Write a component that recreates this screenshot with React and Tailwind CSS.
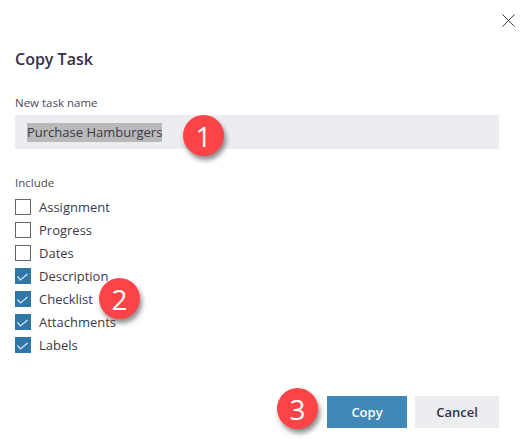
const options = [
  { label: 'Assignment', checked: false },
  { label: 'Progress', checked: false },
  { label: 'Dates', checked: false },
  { label: 'Description', checked: true },
  { label: 'Checklist', checked: true },
  { label: 'Attachments', checked: true },
  { label: 'Labels', checked: true },
];

const Badge = ({ n, className }) => (
  <div
    className={`absolute w-[41px] h-[41px] rounded-full bg-[#fc4346] text-white flex items-center justify-center text-[28px] shadow-[2px_4px_5px_rgba(0,0,0,0.45)] ${className}`}
  >
    {n}
  </div>
);

const Option = ({ label, checked }) => (
  <div className="flex items-center h-[23px] gap-[8px]">
    {checked ? (
      <div className="w-4 h-4 bg-[#2f77a8]">
        <svg width="16" height="16" viewBox="0 0 16 16" fill="none" stroke="#dfeaf2" strokeWidth="1.2">
          <path d="M2.5 8.5 L5.5 12 L12.5 6" />
        </svg>
      </div>
    ) : (
      <div className="w-4 h-4 border border-[#666666] bg-white" />
    )}
    <span className="pt-[3px] text-[13px] text-[#3b3a4a]">{label}</span>
  </div>
);

export default function App() {
  return (
    <div
      className="relative w-[524px] h-[439px] overflow-hidden bg-white pl-[15px] pr-[25px] flex flex-col"
      style={{ fontFamily: '"Open Sans", "Noto Sans", sans-serif' }}
    >
      <button className="absolute top-[14px] right-[9px] w-[13px] h-[13px]">
        <svg width="13" height="13" viewBox="0 0 13 13" fill="none" stroke="#3d3d50" strokeWidth="1">
          <path d="M0.5 0.5 L12.5 12.5 M12.5 0.5 L0.5 12.5" />
        </svg>
      </button>

      <h1 className="mt-[48px] h-[22px] leading-[22px] text-[16px] font-semibold text-[#33324a]">Copy Task</h1>

      <label className="mt-[25px] h-[16px] leading-[16px] text-[11.5px] text-[#4a4a55]">New task name</label>
      <div className="mt-[4px] h-[34px] bg-[#ecedf1] flex items-center pl-[12px]">
        <span className="bg-[#b9b9b9] h-[19px] leading-[19px] text-[13px] text-[#3b3a4a]">Purchase Hamburgers</span>
      </div>

      <div className="mt-[26px] h-[16px] leading-[16px] text-[11.5px] text-[#4a4a55]">Include</div>
      <div className="mt-[4px] flex flex-col">
        {options.map((o) => (
          <Option key={o.label} label={o.label} checked={o.checked} />
        ))}
      </div>

      <div className="mt-[40px] flex justify-end gap-2">
        <button className="w-20 h-8 pt-px bg-[#3f88b8] text-white text-[13px] font-semibold">Copy</button>
        <button className="w-[84px] h-8 pt-px bg-[#ecedf1] text-[#33324a] text-[13px] font-semibold">Cancel</button>
      </div>

      <Badge n="1" className="left-[183px] top-[115px]" />
      <Badge n="2" className="left-[99px] top-[278px]" />
      <Badge n="3" className="left-[277px] top-[388px]" />
    </div>
  );
}
